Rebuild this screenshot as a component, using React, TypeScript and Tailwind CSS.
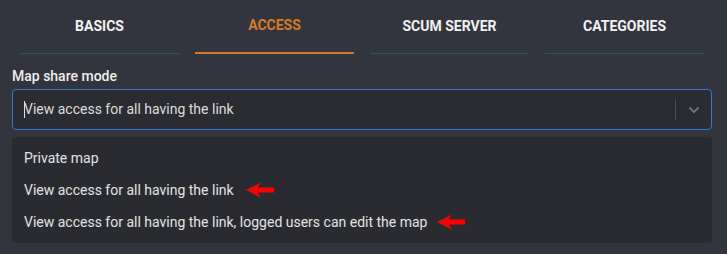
import React from "react";

function Arrow() {
  return (
    <svg width="28" height="18" viewBox="0 0 28 18" className="shrink-0">
      <path d="M0 9 L15 1.5 Q12 5.5 12 6.6 L28 6.6 L28 11.4 L12 11.4 Q12 12.5 15 16.5 Z" fill="#ff0000" />
    </svg>
  );
}

export default function App() {
  const tabs = ["BASICS", "ACCESS", "SCUM SERVER", "CATEGORIES"];
  return (
    <div
      className="w-[727px] h-[254px] bg-[#32353d] px-3 overflow-hidden"
      style={{ fontFamily: "Roboto, 'Liberation Sans', sans-serif" }}
    >
      <div className="flex gap-4 ml-2">
        {tabs.map((t) => {
          const active = t === "ACCESS";
          return (
            <div
              key={t}
              className={
                "w-[159px] h-[54px] flex items-center justify-center text-[14px] font-bold " +
                (active
                  ? "text-[#d57a28] border-b-2 border-[#d57a28]"
                  : "text-[#f2f2f2] border-b border-[#1e5a5e] pt-[1px]")
              }
            >
              <span className="-mt-[1px]">{t}</span>
            </div>
          );
        })}
      </div>
      <div className="mt-[12px] text-[14px] leading-5 font-medium text-[#eeeeee]">Map share mode</div>
      <div className="mt-[3px] h-[41px] w-[700px] border border-[#2e7ad6] rounded-[4px] bg-[#2b2c31] flex items-center">
        <div className="flex-1 pl-[11px] flex items-center text-[14px] text-[#dddddd]">
          <span className="w-px h-[17px] bg-[#dddddd] -mr-[1px]"></span>
          <span>View access for all having the link</span>
        </div>
        <div className="w-px h-[21px] bg-[#4a4c52]"></div>
        <div className="w-[35px] flex items-center justify-center">
          <svg width="12" height="8" viewBox="0 0 12 8">
            <path d="M1.5 1.5 L6 6 L10.5 1.5" stroke="#6e6f73" strokeWidth="2" fill="none" />
          </svg>
        </div>
      </div>
      <div className="mt-[7px] w-[700px] rounded-[4px] bg-[#2a2b30] py-[5px] text-[14px] text-[#e4e4e4]">
        <div className="h-8 flex items-center pl-3">Private map</div>
        <div className="h-8 flex items-center pl-3">
          <span>View access for all having the link</span>
          <span className="ml-[12px] flex items-center"><Arrow /></span>
        </div>
        <div className="h-8 flex items-center pl-3">
          <span>View access for all having the link, logged users can edit the map</span>
          <span className="ml-[10px] flex items-center"><Arrow /></span>
        </div>
      </div>
    </div>
  );
}
